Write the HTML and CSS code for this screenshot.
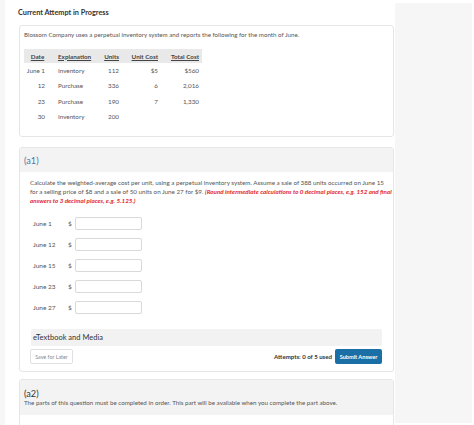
FILE: index.html
```html
<!DOCTYPE html>
<html lang="en">
<head>
<meta charset="utf-8">
<title>Current Attempt in Progress</title>
<link rel="stylesheet" href="styles.css">
</head>
<body>
<div class="page">
  <div class="gutter"></div>
  <main class="main">
    <h1 class="title">Current Attempt in Progress</h1>

    <section class="card intro">
      <p class="intro-text">Blossom Company uses a perpetual inventory system and reports the following for the month of June.</p>
      <table class="inv">
        <thead>
          <tr>
            <th class="c-date">Date</th>
            <th class="c-exp">Explanation</th>
            <th class="c-units">Units</th>
            <th class="c-uc">Unit Cost</th>
            <th class="c-tc">Total Cost</th>
          </tr>
        </thead>
        <tbody>
          <tr><td class="c-date">June 1</td><td class="c-exp">Inventory</td><td class="c-units">112</td><td class="c-uc">$5</td><td class="c-tc">$560</td></tr>
          <tr><td class="c-date">12</td><td class="c-exp">Purchase</td><td class="c-units">336</td><td class="c-uc">6</td><td class="c-tc">2,016</td></tr>
          <tr><td class="c-date">23</td><td class="c-exp">Purchase</td><td class="c-units">190</td><td class="c-uc">7</td><td class="c-tc">1,330</td></tr>
          <tr><td class="c-date">30</td><td class="c-exp">Inventory</td><td class="c-units">200</td><td class="c-uc"></td><td class="c-tc"></td></tr>
        </tbody>
      </table>
    </section>

    <section class="card part">
      <div class="part-head"><span class="part-label active">(a1)</span></div>
      <div class="part-body">
        <p class="question">Calculate the weighted-average cost per unit, using a perpetual inventory system. Assume a sale of 388 units occurred on June 15<br>for a selling price of $8 and a sale of 50 units on June 27 for $9. <em class="hint">(Round intermediate calculations to 0 decimal places, e.g. 152 and final<br>answers to 3 decimal places, e.g. 5.125.)</em></p>
        <div class="answers">
          <div class="answer-row"><span class="ans-label">June 1</span><span class="dollar">$</span><input class="ans-input" type="text"></div>
          <div class="answer-row"><span class="ans-label">June 12</span><span class="dollar">$</span><input class="ans-input" type="text"></div>
          <div class="answer-row"><span class="ans-label">June 15</span><span class="dollar">$</span><input class="ans-input" type="text"></div>
          <div class="answer-row"><span class="ans-label">June 23</span><span class="dollar">$</span><input class="ans-input" type="text"></div>
          <div class="answer-row"><span class="ans-label">June 27</span><span class="dollar">$</span><input class="ans-input" type="text"></div>
        </div>
        <div class="media">eTextbook and Media</div>
        <div class="actions">
          <button class="btn-save" type="button">Save for Later</button>
          <span class="attempts">Attempts: 0 of 5 used</span>
          <button class="btn-submit" type="button">Submit Answer</button>
        </div>
      </div>
    </section>

    <section class="card part locked">
      <div class="part-head locked-head">
        <span class="part-label">(a2)</span>
        <p class="locked-text">The parts of this question must be completed in order. This part will be available when you complete the part above.</p>
      </div>
      <div class="part-empty"></div>
    </section>
  </main>
  <aside class="sidebar"></aside>
</div>
</body>
</html>
```

FILE: styles.css
```css
* { box-sizing: border-box; }

body {
  margin: 0;
  background: #ffffff;
  font-family: Lato, "Open Sans", sans-serif;
  color: #555555;
}

.page {
  display: flex;
  align-items: flex-start;
  width: 474px;
  height: 425px;
  overflow: hidden;
}

.gutter {
  width: 5px;
  align-self: stretch;
  background: #f7f7f7;
}

.main {
  width: 389px;
  padding-left: 14px;
}

.sidebar {
  width: 77px;
  height: 420px;
  margin: 3px 0 0 1px;
  background: #f6f6f6;
}

.title {
  margin: 0 0 8px -1px;
  padding-top: 9px;
  font-size: 7.3px;
  line-height: 8px;
  font-weight: 700;
  color: #333333;
}

.card {
  width: 375px;
  border: 1px solid #e6e6e6;
  border-radius: 3px;
  background: #ffffff;
}

/* intro card */
.intro {
  padding: 5px 4px 12px;
}

.intro-text {
  margin: 0;
  font-size: 6.2px;
  line-height: 8px;
}

.inv {
  margin-top: 10px;
  width: 178px;
  border-collapse: collapse;
  table-layout: fixed;
  font-size: 6.3px;
}

.inv th {
  height: 14px;
  padding: 0;
  background: #e9e9e9;
  font-weight: 700;
  color: #444444;
  text-decoration: underline;
  text-underline-offset: 1px;
  text-align: right;
}

.inv td {
  height: 15.33px;
  padding: 0;
  text-align: right;
  vertical-align: middle;
}

.inv .c-date { width: 26px; padding-right: 5px; }
.inv th.c-date { text-align: center; padding: 0 0 0 1px; }
.inv .c-exp { width: 48px; padding-left: 8px; text-align: left; }
.inv .c-units { width: 26px; padding-right: 5px; }
.inv .c-uc { width: 39px; padding-right: 5px; }
.inv .c-tc { width: 39px; padding-right: 3px; }

/* parts */
.part { margin-top: 10px; }

.part-head {
  display: flex;
  align-items: center;
  height: 24px;
  padding-left: 4px;
  background: #f3f3f3;
}

.part-label {
  font-size: 9.2px;
  line-height: 11px;
  color: #333333;
}

.part-label.active { color: #4a78a8; }

.part-body {
  padding: 6px 11px 7px 10px;
}

.question {
  margin: 0;
  font-size: 6.25px;
  line-height: 9px;
  white-space: nowrap;
}

.hint {
  font-weight: 700;
  color: #e2262c;
}

.answers {
  margin-top: 11.7px;
  padding-left: 3px;
  display: flex;
  flex-direction: column;
  gap: 8.5px;
}

.answer-row {
  display: flex;
  align-items: center;
  height: 12.5px;
}

.ans-label {
  width: 35px;
  font-size: 6.5px;
}

.dollar {
  width: 7px;
  font-size: 6.5px;
}

.ans-input {
  width: 67px;
  height: 12.5px;
  margin: 0;
  padding: 0;
  border: 1px solid #d9d9d9;
  border-radius: 2px;
  background: #ffffff;
}

.media {
  margin: 15.5px 0 0 1px;
  height: 17px;
  padding-left: 2px;
  display: flex;
  align-items: center;
  background: #f2f2f2;
  border-radius: 2px;
  font-size: 7.5px;
  color: #333333;
}

.actions {
  margin-top: 3px;
  display: flex;
  align-items: center;
  height: 15px;
}

.btn-save {
  width: 43px;
  height: 15px;
  padding: 0;
  border: 1px solid #e0e0e0;
  border-radius: 2px;
  background: #ffffff;
  font-family: inherit;
  font-size: 5.4px;
  color: #8a8a8a;
}

.attempts {
  margin-left: auto;
  margin-right: 3px;
  font-size: 6.1px;
  font-weight: 700;
  color: #333333;
}

.btn-submit {
  width: 47px;
  height: 15px;
  padding: 0;
  border: none;
  border-radius: 2px;
  background: #1a6fa6;
  font-family: inherit;
  font-size: 5.6px;
  font-weight: 700;
  color: #ffffff;
}

.locked { margin-top: 7px; }

.locked-head {
  display: block;
  height: auto;
  padding: 8px 4px 8px 4px;
}

.locked-head .part-label { display: block; }

.locked-text {
  margin: 0;
  font-size: 6.2px;
  line-height: 8px;
}

.part-empty {
  height: 20px;
}
```
